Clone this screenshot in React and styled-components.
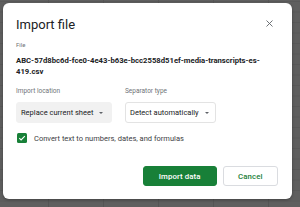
import React from "react";
import styled, { createGlobalStyle } from "styled-components";

const GlobalStyle = createGlobalStyle`
  html, body {
    margin: 0;
    padding: 0;
  }
  body {
    width: 300px;
    height: 207px;
    overflow: hidden;
    font-family: Roboto, "Liberation Sans", Arial, sans-serif;
    background-color: #5f5f5f;
    background-image:
      linear-gradient(to right, #555 1px, transparent 1px),
      linear-gradient(to bottom, #595959 1px, transparent 1px);
    background-size: 55px 100%, 100% 10.5px;
    background-position: 48px 0, 0 1px;
  }
`;

const Screen = styled.div`
  padding: 3px;
`;

const Dialog = styled.div`
  width: 289px;
  height: 196px;
  box-sizing: border-box;
  padding: 13px 14px 13px 13px;
  background: #fff;
  border-radius: 6px;
  box-shadow: 0 1px 3px rgba(0, 0, 0, 0.3);
  display: flex;
  flex-direction: column;
`;

const Header = styled.div`
  display: flex;
  align-items: center;
  justify-content: space-between;
  height: 17px;
`;

const Title = styled.h1`
  margin: 0;
  font-size: 13px;
  line-height: 17px;
  font-weight: 400;
  color: #202124;
`;

const CloseButton = styled.button`
  width: 17px;
  height: 17px;
  margin-top: -2px;
  padding: 0;
  border: none;
  background: none;
  display: flex;
  align-items: center;
  justify-content: center;
  color: #5f6368;
`;

const Label = styled.div`
  margin-top: ${(p) => p.$top || 0}px;
  font-size: ${(p) => p.$size || 6.5}px;
  line-height: 8px;
  color: #6f7378;
`;

const FileName = styled.div`
  margin-top: 7px;
  font-size: 7.7px;
  line-height: 10.5px;
  font-weight: 700;
  color: #202124;
`;

const Options = styled.div`
  margin-top: 10px;
  display: grid;
  grid-template-columns: 96px 91px;
  column-gap: 13px;
`;

const Field = styled.div`
  display: flex;
  flex-direction: column;
  gap: 7px;
`;

const Select = styled.div`
  height: 21px;
  box-sizing: border-box;
  display: flex;
  align-items: center;
  gap: 6px;
  padding: 0 4px;
  border-radius: 3px;
  font-size: 7.5px;
  color: #202124;
  background: ${(p) => (p.$filled ? "#f1f1f1" : "#fff")};
  border: 1px solid ${(p) => (p.$filled ? "#f1f1f1" : "#e3e3e3")};
`;

const Caret = styled.span`
  width: 0;
  height: 0;
  border-left: 2px solid transparent;
  border-right: 2px solid transparent;
  border-top: 2px solid #5f6368;
`;

const CheckRow = styled.label`
  margin-top: 10px;
  display: flex;
  align-items: center;
  gap: 7px;
  height: 10px;
  font-size: 7.5px;
  color: #3c4043;
  padding-left: 1px;
`;

const Box = styled.span`
  width: 10px;
  height: 10px;
  border-radius: 1.5px;
  background: #188038;
  display: flex;
  align-items: center;
  justify-content: center;
`;

const Actions = styled.div`
  margin-top: 23px;
  display: flex;
  justify-content: flex-end;
  gap: 6px;
`;

const Button = styled.button`
  height: 20px;
  box-sizing: border-box;
  padding: 0 ${(p) => (p.$primary ? 15 : 14.5)}px;
  border-radius: 3px;
  font-family: inherit;
  font-size: 7.8px;
  font-weight: 500;
  letter-spacing: 0.1px;
  background: ${(p) => (p.$primary ? "#188038" : "#fff")};
  color: ${(p) => (p.$primary ? "#fff" : "#188038")};
  border: 1px solid ${(p) => (p.$primary ? "#188038" : "#dadce0")};
`;

export default function App() {
  return (
    <>
      <GlobalStyle />
      <Screen>
        <Dialog>
          <Header>
            <Title>Import file</Title>
            <CloseButton aria-label="Close">
              <svg width="7" height="7" viewBox="0 0 7 7">
                <path d="M0.5 0.5L6.5 6.5M6.5 0.5L0.5 6.5" stroke="currentColor" strokeWidth="0.9" />
              </svg>
            </CloseButton>
          </Header>
          <Label $top={8} $size={6}>File</Label>
          <FileName>ABC-57d8bc6d-fce0-4e43-b63e-bcc2558d51ef-media-transcripts-es-419.csv</FileName>
          <Options>
            <Field>
              <Label>Import location</Label>
              <Select $filled>
                Replace current sheet <Caret />
              </Select>
            </Field>
            <Field>
              <Label>Separator type</Label>
              <Select>
                Detect automatically <Caret />
              </Select>
            </Field>
          </Options>
          <CheckRow>
            <Box>
              <svg width="8" height="8" viewBox="0 0 8 8">
                <path d="M1.3 4.2L3.1 6L6.8 2.1" fill="none" stroke="#fff" strokeWidth="1.1" />
              </svg>
            </Box>
            Convert text to numbers, dates, and formulas
          </CheckRow>
          <Actions>
            <Button $primary>Import data</Button>
            <Button>Cancel</Button>
          </Actions>
        </Dialog>
      </Screen>
    </>
  );
}
